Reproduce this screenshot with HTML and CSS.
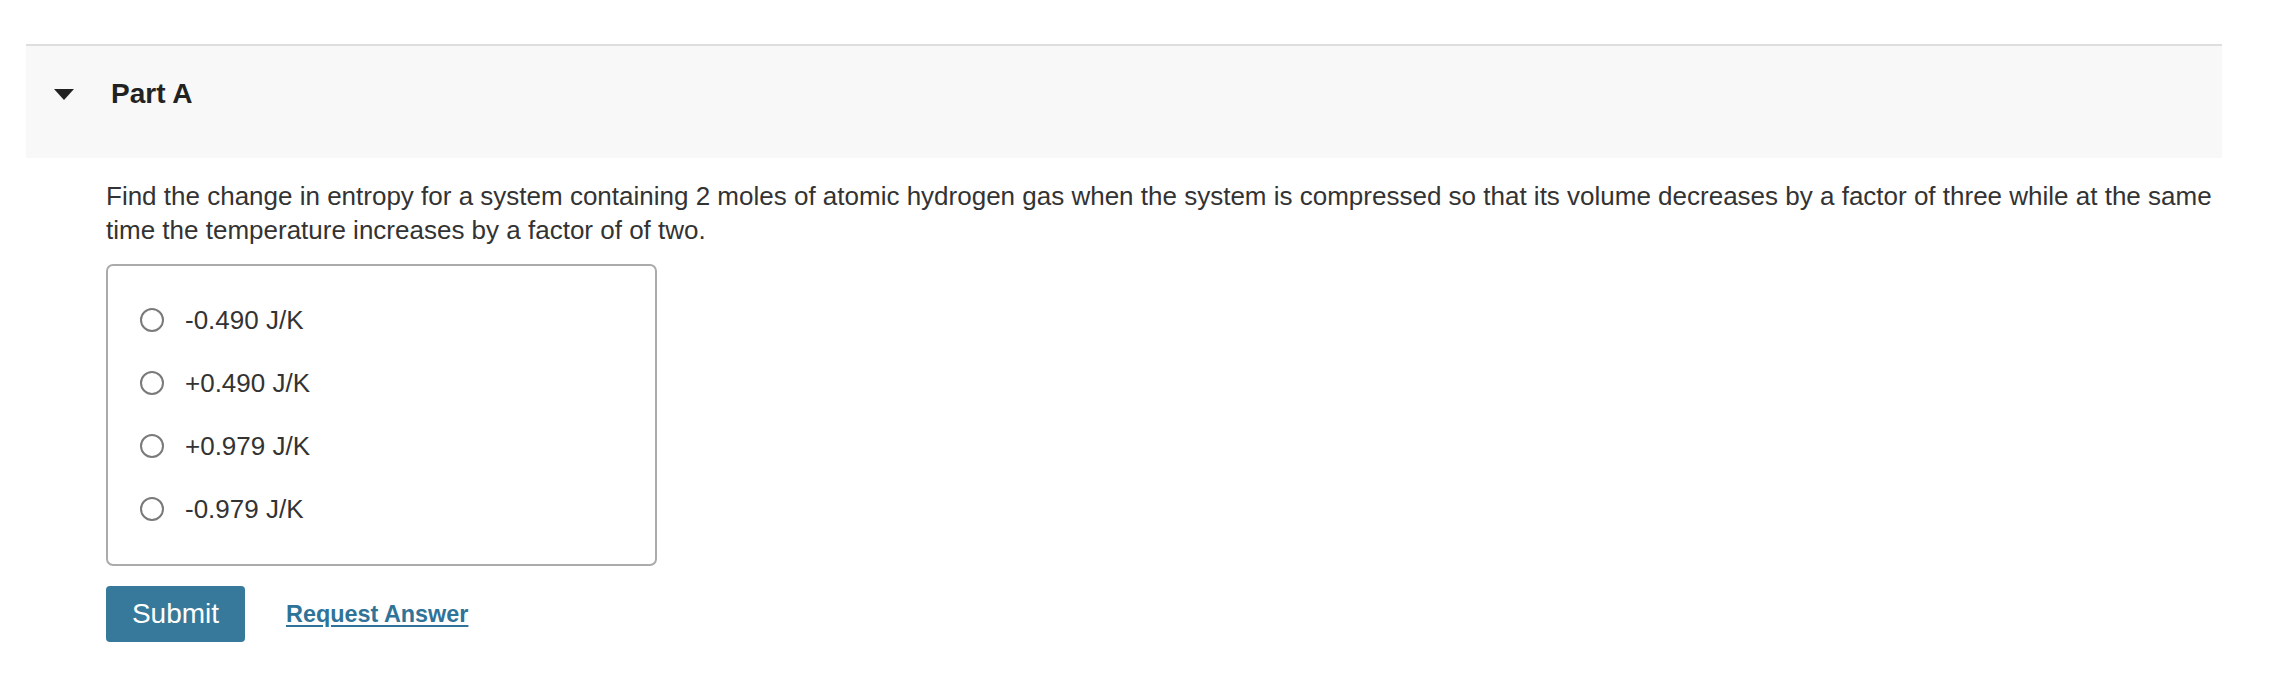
FILE: index.html
```html
<!DOCTYPE html>
<html lang="en">
<head>
<meta charset="utf-8">
<title>Part A</title>
<link rel="stylesheet" href="styles.css">
</head>
<body>
<section class="part">
  <div class="part-header">
    <svg class="caret" width="20" height="11" viewBox="0 0 20 11" aria-hidden="true"><path d="M0 0 H20 L10 11 Z" fill="#222"/></svg>
    <h2 class="part-title">Part A</h2>
  </div>
  <div class="part-body">
    <p class="question">Find the change in entropy for a system containing 2 moles of atomic hydrogen gas when the system is compressed so that its volume decreases by a factor of three while at the same time the temperature increases by a factor of of two.</p>
    <div class="choices">
      <label class="choice"><span class="radio"></span><span class="choice-text">-0.490 J/K</span></label>
      <label class="choice"><span class="radio"></span><span class="choice-text">+0.490 J/K</span></label>
      <label class="choice"><span class="radio"></span><span class="choice-text">+0.979 J/K</span></label>
      <label class="choice"><span class="radio"></span><span class="choice-text">-0.979 J/K</span></label>
    </div>
    <div class="actions">
      <button class="submit" type="button">Submit</button>
      <a class="request" href="#">Request Answer</a>
    </div>
  </div>
</section>
</body>
</html>
```
FILE: styles.css
```css
* { box-sizing: border-box; }
html, body { margin: 0; padding: 0; background: #fff; }
body {
  font-family: "Liberation Sans", Arial, Helvetica, sans-serif;
  color: #333;
}
.part {
  margin: 44px 66px 0 26px;
}
.part-header {
  border-top: 2px solid #dedede;
  background: #f8f8f8;
  height: 114px;
  display: flex;
  align-items: center;
  padding-left: 28px;
  padding-bottom: 16px;
  gap: 37px;
}
.caret { display: block; flex: none; }
.part-title {
  margin: 0;
  font-size: 28px;
  font-weight: bold;
  color: #222;
  line-height: 1;
}
.part-body {
  padding-left: 80px;
  padding-top: 21px;
}
.question {
  margin: 0;
  font-size: 26px;
  line-height: 34px;
  color: #333;
}
.choices {
  margin-top: 17px;
  width: 551px;
  height: 302px;
  border: 2px solid #ababab;
  border-radius: 7px;
  padding: 37px 0 0 32px;
  display: flex;
  flex-direction: column;
  gap: 29px;
}
.choice {
  display: flex;
  align-items: center;
  height: 34px;
  gap: 21px;
  font-size: 26px;
  color: #333;
}
.radio {
  width: 24px;
  height: 24px;
  border: 2px solid #7a7a7a;
  border-radius: 50%;
  background: #fff;
  flex: none;
}
.actions {
  margin-top: 20px;
  display: flex;
  align-items: center;
  gap: 41px;
}
.submit {
  width: 139px;
  height: 56px;
  border: none;
  border-radius: 4px;
  background: #37799a;
  color: #fff;
  font-family: "Liberation Sans", Arial, Helvetica, sans-serif;
  font-size: 28px;
  padding: 0;
}
.request {
  font-size: 23.4px;
  font-weight: bold;
  color: #2f7399;
  text-decoration: underline;
  text-decoration-thickness: 2px;
  text-underline-offset: 3px;
}
```
